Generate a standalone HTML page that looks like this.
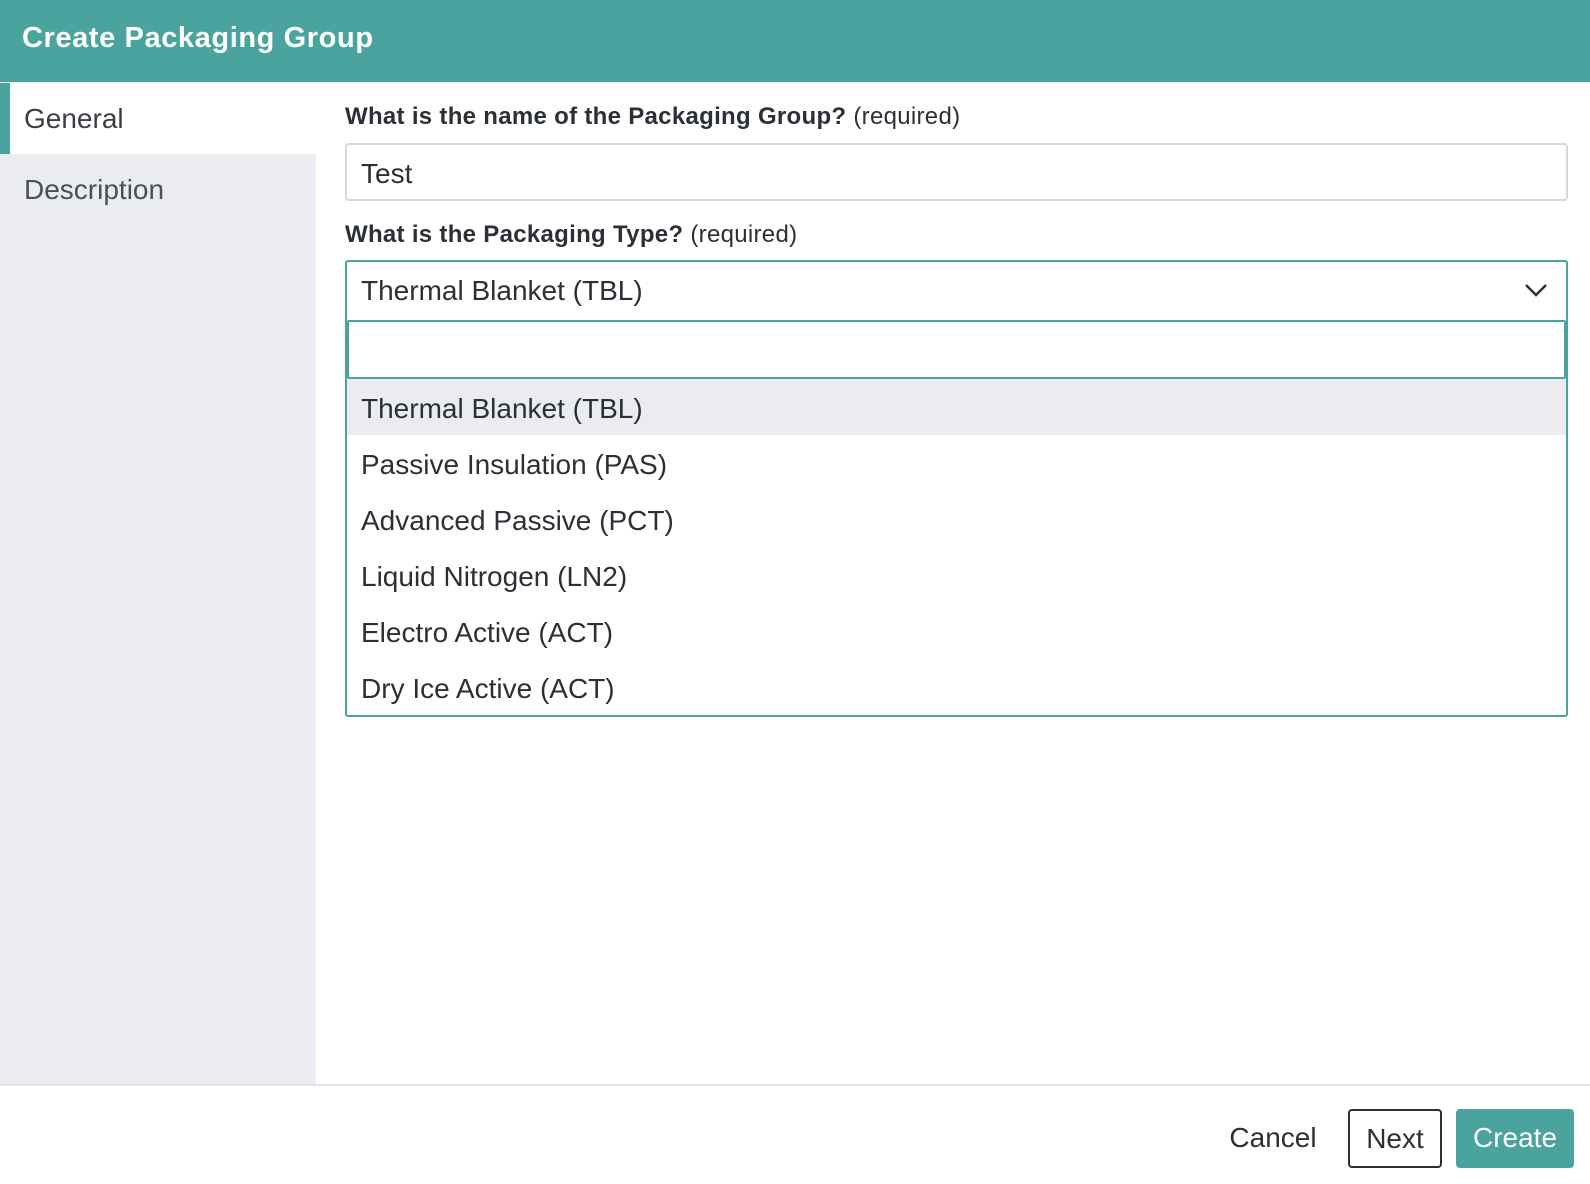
<!DOCTYPE html>
<html><head><style>
*{box-sizing:border-box;margin:0;padding:0}
body{width:1590px;height:1184px;background:#fff;font-family:"Liberation Sans",sans-serif;color:#2b3036;position:relative;overflow:hidden}
.hdr{position:absolute;left:0;top:0;width:1590px;height:82px;background:#4ba39d;color:#fff;font-weight:bold;font-size:29px;letter-spacing:0.6px;padding:22px 0 0 22px}
.side{position:absolute;left:0;top:83px;width:316px;height:1001px;background:#ebecef}
.tab{position:absolute;left:0;width:316px;height:71px;font-size:28px;padding:20px 0 0 24px;color:#3a3f45}
.t1{top:0;background:#fff;border-left:10px solid #4ba39d;padding-left:14px}
.t2{top:71px;color:#4a5058}
.lbl{position:absolute;left:345px;font-size:24px;letter-spacing:0.3px;font-weight:bold;color:#2b3036}
.lbl span{font-weight:normal}
.box{position:absolute;left:345px;width:1223px;border:2px solid #d5d8dc;border-radius:4px;font-size:28px;padding-left:14px}
.dd{position:absolute;left:345px;top:260px;width:1223px;height:457px;border:2px solid #4ba39d;border-radius:3px}
.opt{position:absolute;left:0;width:1219px;height:56px;font-size:28px;padding:14px 0 0 14px}
.foot{position:absolute;left:0;top:1084px;width:1590px;height:2px;background:#dfe3e8}
.btn{position:absolute;top:1109px;height:59px;font-size:28px;text-align:center;line-height:57px;border-radius:4px}
</style></head><body>
<div class="hdr">Create Packaging Group</div>
<div class="side">
<div class="tab t1">General</div>
<div class="tab t2">Description</div>
</div>
<div class="lbl" style="top:103px">What is the name of the Packaging Group? <span>(required)</span></div>
<div class="box" style="top:143px;height:58px;line-height:57px">Test</div>
<div class="lbl" style="top:221px">What is the Packaging Type? <span>(required)</span></div>
<div class="dd">
<div class="opt" style="top:0;height:58px;padding-top:13px">Thermal Blanket (TBL)</div>
<svg style="position:absolute;right:18px;top:20px" width="24" height="16" viewBox="0 0 24 16"><path d="M2 3 L12 13 L22 3" fill="none" stroke="#2b3036" stroke-width="2.5"/></svg>
<div style="position:absolute;left:0;top:58px;width:1219px;height:59px;border:2px solid #4ba39d;border-radius:2px"></div>
<div class="opt" style="top:117px;background:#ebecef">Thermal Blanket (TBL)</div>
<div class="opt" style="top:173px">Passive Insulation (PAS)</div>
<div class="opt" style="top:229px">Advanced Passive (PCT)</div>
<div class="opt" style="top:285px">Liquid Nitrogen (LN2)</div>
<div class="opt" style="top:341px">Electro Active (ACT)</div>
<div class="opt" style="top:397px">Dry Ice Active (ACT)</div>
</div>
<div class="foot"></div>
<div class="btn" style="left:1218px;width:110px">Cancel</div>
<div class="btn" style="left:1348px;width:94px;border:2px solid #2b3036;line-height:55px">Next</div>
<div class="btn" style="left:1456px;width:118px;background:#4ba39d;color:#fff">Create</div>
</body></html>
